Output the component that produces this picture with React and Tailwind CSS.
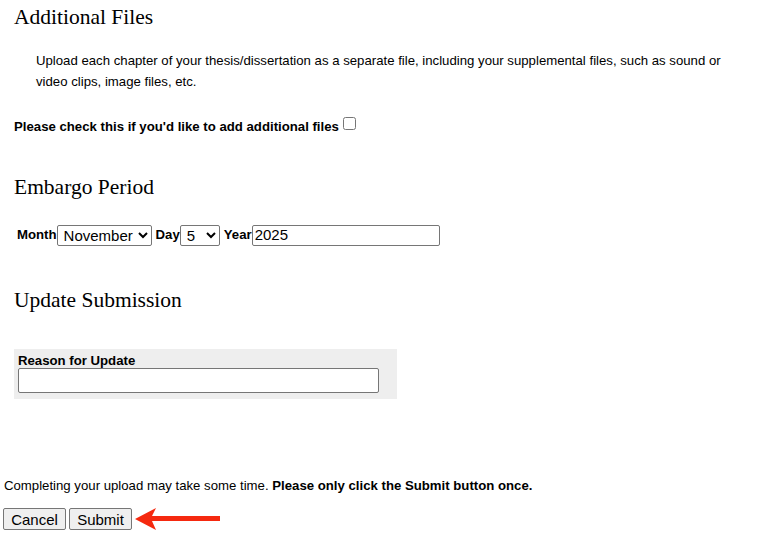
import React from "react";

const serif = "font-['Liberation_Serif',serif]";

export default function App() {
  return (
    <div className="w-[773px] h-[540px] bg-white text-black font-['Liberation_Sans',Arial,sans-serif] text-[13.2px] overflow-hidden relative">
      {/* ADDITIONAL FILES */}
      <h2 className={`${serif} text-[21.5px] leading-[24px] pl-[14px] pt-[5px]`}>Additional Files</h2>
      <p className="pl-[36px] pr-[40px] mt-[21px] leading-[21px]">
        Upload each chapter of your thesis/dissertation as a separate file, including your supplemental files, such as sound or video clips, image files, etc.
      </p>
      <div className="pl-[14px] mt-[25px] flex items-center font-bold">
        <span>Please check this if you'd like to add additional files</span>
        <input type="checkbox" className="ml-[4px] w-[13px] h-[13px] -mt-[6px]" />
      </div>

      {/* EMBARGO */}
      <h2 className={`${serif} text-[21.5px] leading-[24px] pl-[14px] mt-[38px]`}>Embargo Period</h2>
      <div className="pl-[17px] mt-[26px] flex items-center font-bold h-[21px]">
        <span>Month</span>
        <select defaultValue="November" className="w-[95px] h-[21px] border border-[#767676] rounded-[2px] font-normal text-[15px] pl-[2px] bg-white">
          <option>November</option>
        </select>
        <span className="ml-[4px]">Day</span>
        <select defaultValue="5" className="w-[40px] h-[21px] border border-[#767676] rounded-[2px] font-normal text-[15px] pl-[2px] bg-white">
          <option>5</option>
        </select>
        <span className="ml-[4px]">Year</span>
        <input defaultValue="2025" className="w-[188px] h-[21px] border border-[#767676] rounded-[2px] font-normal text-[15px] px-[2px]" />
      </div>

      {/* UPDATE */}
      <h2 className={`${serif} text-[21.5px] leading-[24px] pl-[14px] mt-[42px]`}>Update Submission</h2>
      <div className="ml-[14px] mt-[37px] w-[383px] h-[50px] bg-[#eeeeee] pl-[4px] pt-[4px]">
        <div className="font-bold leading-[15px]">Reason for Update</div>
        <input className="block w-[361px] h-[25px] border border-[#767676] bg-white rounded-[2px]" />
      </div>

      {/* FOOTER */}
      <p className="pl-[4px] mt-[79px] leading-[15px]">
        Completing your upload may take some time. <b>Please only click the Submit button once.</b>
      </p>
      <div className="pl-[3px] mt-[13px] flex items-center gap-[3px]">
        <button className="w-[63px] h-[22px] border border-[#767676] bg-[#efefef] rounded-[2px] text-[15px]">Cancel</button>
        <button className="w-[63px] h-[22px] border border-[#767676] bg-[#efefef] rounded-[2px] text-[15px]">Submit</button>
        <svg width="90" height="26" viewBox="0 0 90 26" className="-ml-[1px]">
          <polygon points="1,13 22,2 18,10 86,10 86,15 18,15 22,24" fill="#f5290f" />
        </svg>
      </div>
    </div>
  );
}
